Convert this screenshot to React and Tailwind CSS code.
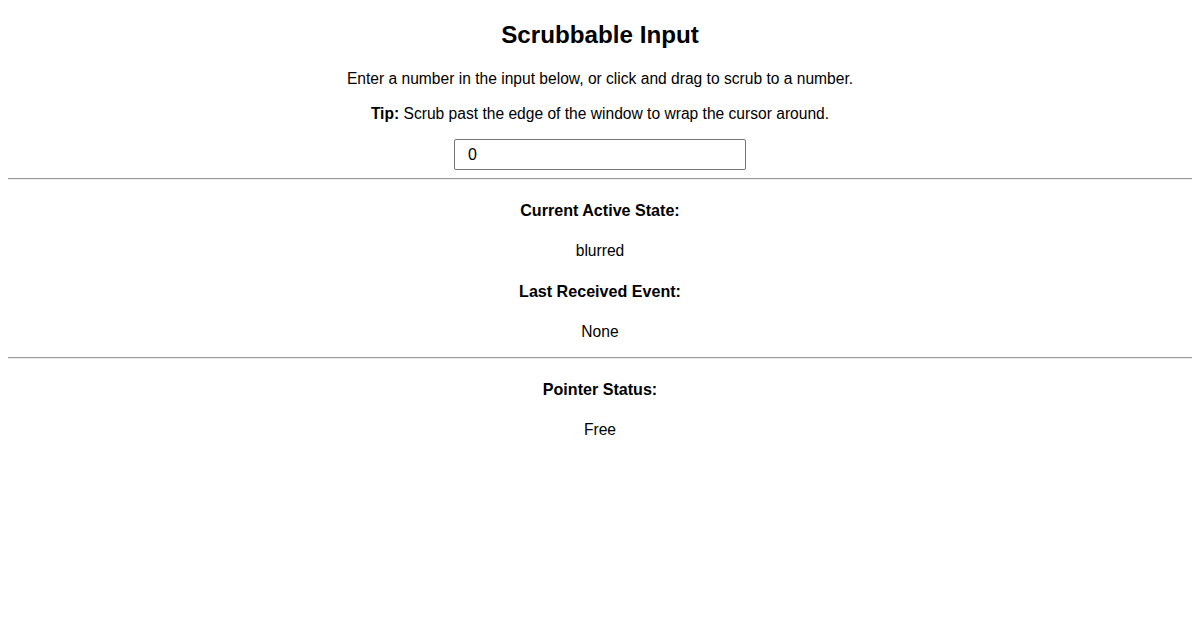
export default function App() {
  return (
    <div className="min-h-[630px] bg-white px-2 pt-[21px] text-center text-[15.6px] leading-[19px] text-black font-['Liberation_Sans',Arial,sans-serif]">
      <h2 className="text-[24.2px] leading-[27.6px] font-bold">Scrubbable Input</h2>
      <p className="mt-[20px]">Enter a number in the input below, or click and drag to scrub to a number.</p>
      <p className="mt-[16px]">
        <b className="font-bold">Tip:</b> Scrub past the edge of the window to wrap the cursor around.
      </p>
      <div className="mt-[16.5px] flex justify-center">
        <input
          type="text"
          defaultValue="0"
          className="w-[292px] h-[31px] border border-[#767676] rounded-[2px] px-[13px] text-[16px] text-black font-['Liberation_Sans',Arial,sans-serif] outline-none"
        />
      </div>
      <hr className="mt-[8px] h-0 border-t border-b border-t-[#9a9a9a] border-b-[#eeeeee]" />
      <h4 className="mt-[20.5px] text-[16.1px] font-bold">Current Active State:</h4>
      <p className="mt-[21.3px]">blurred</p>
      <h4 className="mt-[22px] text-[16.1px] font-bold">Last Received Event:</h4>
      <p className="mt-[21.3px]">None</p>
      <hr className="mt-[16px] h-0 border-t border-b border-t-[#9a9a9a] border-b-[#eeeeee]" />
      <h4 className="mt-[21.3px] text-[16.1px] font-bold">Pointer Status:</h4>
      <p className="mt-[20.3px]">Free</p>
    </div>
  );
}
